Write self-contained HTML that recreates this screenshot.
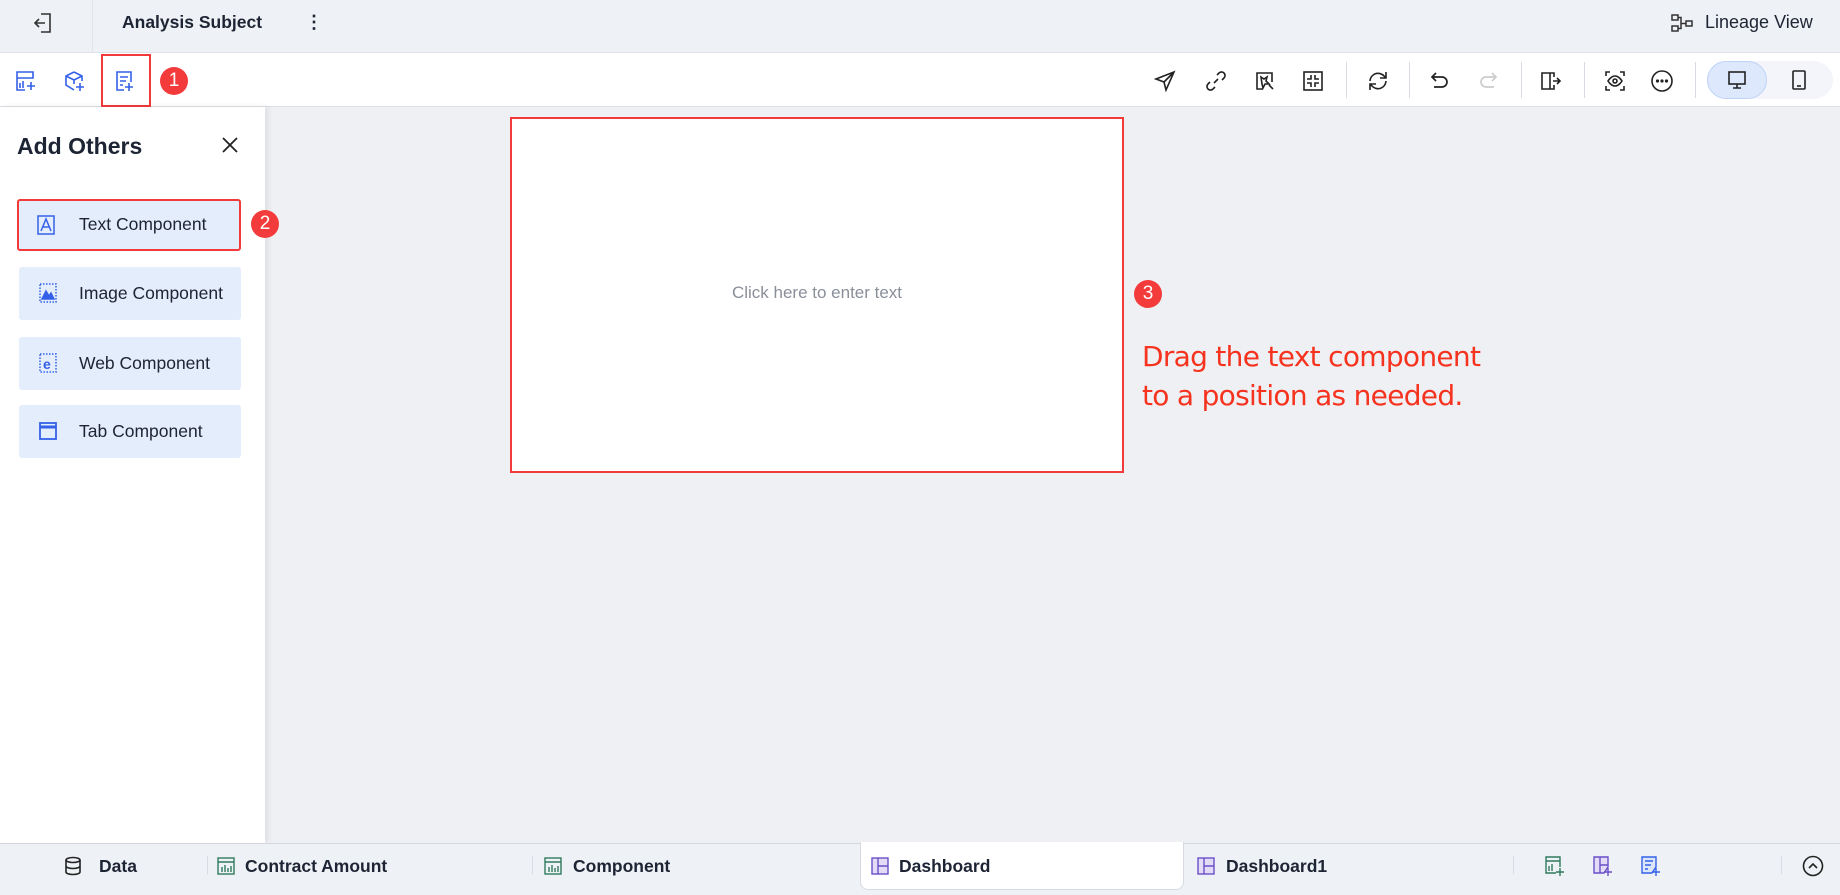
<!DOCTYPE html>
<html><head><meta charset="utf-8"><style>
*{box-sizing:border-box;margin:0;padding:0}
body{width:1840px;height:895px;overflow:hidden;background:#eff0f4;font-family:"Liberation Sans",sans-serif;color:#1d2434;position:relative}
.abs{position:absolute}
.top{left:0;top:0;width:1840px;height:53px;background:#eef1f5;border-bottom:1px solid #dfe2e8}
.tb{left:0;top:53px;width:1840px;height:54px;background:#fff;border-bottom:1px solid #dcdfe5}
.panel{left:0;top:107px;width:265px;height:736px;background:#fff;box-shadow:3px 0 6px rgba(0,0,0,.08)}
.item{position:absolute;left:19px;width:222px;height:53px;background:#e4edfc;border-radius:3px;font-size:17.5px;line-height:53px;padding-left:60px}
.item svg{position:absolute;left:20px;top:16px}
.badge{position:absolute;width:28px;height:28px;border-radius:50%;background:#f43b3b;color:#fff;font-size:19px;text-align:center;line-height:28px}
.bot{left:0;top:843px;width:1840px;height:52px;background:#eef1f5;border-top:1px solid #d4d7de}
.bt{position:absolute;top:855px;font-size:17.5px;font-weight:bold;line-height:22px}
.sep{position:absolute;width:1px;background:#d8dbe2}
svg{display:block}
</style></head><body>
<div class="abs top"></div>
<div class="sep" style="left:92px;top:0;height:53px;background:#e2e5ea"></div>
<svg class="abs" style="left:33px;top:12px" width="20" height="22" viewBox="0 0 20 22" fill="none" stroke="#333" stroke-width="1.6"><path d="M8 2h9v18H8M12 11H2M6 7l-4 4 4 4"/></svg>
<div class="abs" style="left:122px;top:12px;font-size:17.5px;font-weight:bold">Analysis Subject</div>
<div class="abs" style="left:305px;top:12px;font-size:18px;font-weight:bold">⋮</div>
<svg class="abs" style="left:1670px;top:13px" width="24" height="20" viewBox="0 0 24 20" fill="none" stroke="#333" stroke-width="1.5"><rect x="2" y="2" width="6" height="5"/><rect x="2" y="13" width="6" height="5"/><rect x="16" y="8" width="6" height="5"/><path d="M8 4.5h3v11H8M11 10.5h5"/></svg>
<div class="abs" style="left:1705px;top:12px;font-size:18px">Lineage View</div>

<div class="abs tb"></div>
<svg class="abs" style="left:15px;top:70px" width="22" height="22" viewBox="0 0 22 22" fill="none" stroke="#3461e8" stroke-width="1.6"><path d="M2 2h16v6H2zM2 8v12h8M5 18v-5M8 18v-7M16 12v8M12 16h8"/></svg>
<svg class="abs" style="left:64px;top:70px" width="22" height="22" viewBox="0 0 22 22" fill="none" stroke="#3461e8" stroke-width="1.6"><path d="M10 2l8 4v5M10 2L2 6v9l8 5M2 6l8 4 8-4M10 10v4M16 13v8M12 17h8"/></svg>
<svg class="abs" style="left:114px;top:70px" width="22" height="22" viewBox="0 0 22 22" fill="none" stroke="#3461e8" stroke-width="1.6"><path d="M10 20H3V2h14v10M6 7h8M6 11h6M6 15h3M15 13v8M11 17h8"/></svg>
<div class="abs" style="left:101px;top:54px;width:50px;height:53px;border:2px solid #f23a3a"></div>
<div class="badge" style="left:160px;top:67px">1</div>

<svg class="abs" style="left:1154px;top:70px" width="22" height="22" viewBox="0 0 22 22" fill="none" stroke="#222" stroke-width="1.6"><path d="M20 2L2 9l8 3 2 8z M20 2L10 12"/></svg>
<svg class="abs" style="left:1205px;top:70px" width="22" height="22" viewBox="0 0 22 22" fill="none" stroke="#222" stroke-width="1.6"><path d="M9 13l4-4M12 5l2-2a3.5 3.5 0 015 5l-2 2M10 17l-2 2a3.5 3.5 0 01-5-5l2-2"/></svg>
<svg class="abs" style="left:1254px;top:70px" width="22" height="22" viewBox="0 0 22 22" fill="none" stroke="#222" stroke-width="1.6"><path d="M9 19H3V3h15v9M7 7l3 2 3-2-1 4 3 3-4 0-2 4-1-4z M15 15l4 4"/></svg>
<svg class="abs" style="left:1302px;top:70px" width="22" height="22" viewBox="0 0 22 22" fill="none" stroke="#222" stroke-width="1.6"><rect x="2" y="2" width="18" height="18"/><path d="M9 5v4H5M13 5v4h4M9 17v-4H5M13 17v-4h4"/></svg>
<div class="sep" style="left:1346px;top:62px;height:36px"></div>
<svg class="abs" style="left:1366px;top:69px" width="24" height="24" viewBox="0 0 24 24" fill="none" stroke="#222" stroke-width="1.6"><path d="M4 12a8 8 0 0114-5l2 2M20 12a8 8 0 01-14 5l-2-2M20 3v6h-6M4 21v-6h6"/></svg>
<div class="sep" style="left:1409px;top:62px;height:36px"></div>
<svg class="abs" style="left:1429px;top:70px" width="22" height="22" viewBox="0 0 22 22" fill="none" stroke="#222" stroke-width="1.7"><path d="M7 3L3 7l4 4M3 7h10a5 5 0 010 10H5"/></svg>
<svg class="abs" style="left:1477px;top:70px" width="22" height="22" viewBox="0 0 22 22" fill="none" stroke="#ccc" stroke-width="1.7"><path d="M15 3l4 4-4 4M19 7H9a5 5 0 000 10h8"/></svg>
<div class="sep" style="left:1521px;top:62px;height:36px"></div>
<svg class="abs" style="left:1540px;top:70px" width="22" height="22" viewBox="0 0 22 22" fill="none" stroke="#222" stroke-width="1.6"><path d="M2 3h8v16H2zM10 3h4v4M10 19h4v-4M13 11h7M17 8l3 3-3 3"/></svg>
<div class="sep" style="left:1584px;top:62px;height:36px"></div>
<svg class="abs" style="left:1604px;top:70px" width="22" height="22" viewBox="0 0 22 22" fill="none" stroke="#222" stroke-width="1.6"><path d="M2 6V2h4M16 2h4v4M20 16v4h-4M6 20H2v-4M4 11s3-5 7-5 7 5 7 5-3 5-7 5-7-5-7-5z"/><circle cx="11" cy="11" r="2"/></svg>
<svg class="abs" style="left:1650px;top:69px" width="24" height="24" viewBox="0 0 24 24" fill="#222" stroke="#222" stroke-width="1.6"><circle cx="12" cy="12" r="10" fill="none"/><circle cx="7.5" cy="12" r=".8"/><circle cx="12" cy="12" r=".8"/><circle cx="16.5" cy="12" r=".8"/></svg>
<div class="sep" style="left:1695px;top:62px;height:36px"></div>
<div class="abs" style="left:1707px;top:61px;width:126px;height:38px;background:#f3f5fb;border-radius:19px"></div>
<div class="abs" style="left:1707px;top:61px;width:60px;height:38px;background:#dde8fc;border:1px solid #bfd2f7;border-radius:19px"></div>
<svg class="abs" style="left:1726px;top:69px" width="22" height="22" viewBox="0 0 22 22" fill="none" stroke="#222" stroke-width="1.6"><rect x="3" y="3" width="16" height="12"/><path d="M11 15v4M7 19h8"/></svg>
<svg class="abs" style="left:1788px;top:69px" width="22" height="22" viewBox="0 0 22 22" fill="none" stroke="#222" stroke-width="1.6"><rect x="5" y="2" width="12" height="18" rx="1"/><path d="M9 17h4"/></svg>

<div class="abs panel"></div>
<div class="abs" style="left:17px;top:133px;font-size:23px;font-weight:bold">Add Others</div>
<svg class="abs" style="left:221px;top:136px" width="18" height="18" viewBox="0 0 18 18" stroke="#222" stroke-width="1.8"><path d="M2 2l14 14M16 2L2 16"/></svg>
<div class="item" style="top:199px;left:17px;width:224px;height:52px;border:2.5px solid #f23a3a;line-height:47px;padding-left:60px">
<svg style="left:18px;top:14px" width="18" height="20" viewBox="0 0 18 20" fill="none" stroke="#3461e8" stroke-width="1.5"><rect x="1" y="1" width="16" height="18"/><path d="M4 16l5-12 5 12M6 12h6"/></svg>Text Component</div>
<div class="badge" style="left:251px;top:210px">2</div>
<div class="item" style="top:267px"><svg width="18" height="20" viewBox="0 0 18 20" fill="none" stroke="#3461e8" stroke-width="1.5"><rect x="1" y="1" width="16" height="18" stroke-dasharray="1.5 1.5"/><path d="M3 16l4-8 3 5 2-3 3 6z" fill="#3461e8"/></svg>Image Component</div>
<div class="item" style="top:337px"><svg width="18" height="20" viewBox="0 0 18 20" fill="none" stroke="#3461e8" stroke-width="1.5"><rect x="1" y="1" width="16" height="18" stroke-dasharray="1.5 1.5"/><text x="4" y="16" font-size="14" font-weight="bold" fill="#3461e8" stroke="none" font-family="Liberation Sans">e</text></svg>Web Component</div>
<div class="item" style="top:405px"><svg width="18" height="20" viewBox="0 0 18 20" fill="none" stroke="#3461e8" stroke-width="1.8"><rect x="1" y="2" width="16" height="16"/><path d="M1 6h16" stroke-width="3"/></svg>Tab Component</div>

<div class="abs" style="left:510px;top:117px;width:614px;height:356px;background:#fff;border:2.5px solid #f23a3a"></div>
<div class="abs" style="left:510px;top:283px;width:614px;text-align:center;font-size:17px;color:#8a8f99">Click here to enter text</div>
<div class="badge" style="left:1134px;top:280px">3</div>
<div class="abs" style="left:1142px;top:337px;font-size:28px;line-height:39px;color:#f5331f;font-family:'DejaVu Sans','Liberation Sans',sans-serif;letter-spacing:-0.7px">Drag the text component<br>to a position as needed.</div>

<div class="abs bot"></div>
<div class="abs" style="left:860px;top:842px;width:324px;height:48px;background:#fff;border-radius:0 0 8px 8px;border:1px solid #d8dbe2;border-top:none"></div>
<svg class="abs" style="left:64px;top:856px" width="18" height="20" viewBox="0 0 18 20" fill="none" stroke="#222" stroke-width="1.6"><ellipse cx="9" cy="4" rx="7" ry="2.5"/><path d="M2 4v12c0 1.4 3 2.5 7 2.5s7-1.1 7-2.5V4M2 10c0 1.4 3 2.5 7 2.5s7-1.1 7-2.5"/></svg>
<div class="bt" style="left:99px">Data</div>
<div class="sep" style="left:207px;top:856px;height:18px"></div>
<svg class="abs" style="left:217px;top:857px" width="18" height="18" viewBox="0 0 18 18" fill="none" stroke="#2f7a5c" stroke-width="1.4"><rect x="1" y="1" width="16" height="16"/><path d="M1 5h16M5 15v-5M8 15v-7M11 15v-4M14 15v-6"/></svg>
<div class="bt" style="left:245px">Contract Amount</div>
<div class="sep" style="left:532px;top:856px;height:18px"></div>
<svg class="abs" style="left:544px;top:857px" width="18" height="18" viewBox="0 0 18 18" fill="none" stroke="#2f7a5c" stroke-width="1.4"><rect x="1" y="1" width="16" height="16"/><path d="M1 5h16M5 15v-5M8 15v-7M11 15v-4M14 15v-6"/></svg>
<div class="bt" style="left:573px">Component</div>
<svg class="abs" style="left:871px;top:857px" width="18" height="18" viewBox="0 0 18 18" fill="#e3dcf7" stroke="#6a4fc8" stroke-width="1.4"><rect x="1" y="1" width="16" height="16"/><path d="M7 1v16M7 9h10"/></svg>
<div class="bt" style="left:899px">Dashboard</div>
<svg class="abs" style="left:1197px;top:857px" width="18" height="18" viewBox="0 0 18 18" fill="#e3dcf7" stroke="#6a4fc8" stroke-width="1.4"><rect x="1" y="1" width="16" height="16"/><path d="M7 1v16M7 9h10"/></svg>
<div class="bt" style="left:1226px">Dashboard1</div>
<div class="sep" style="left:1513px;top:856px;height:18px"></div>
<svg class="abs" style="left:1544px;top:855px" width="22" height="22" viewBox="0 0 22 22" fill="none" stroke="#2f7a5c" stroke-width="1.4"><path d="M12 18H2V2h14v10M2 6h14M5 16v-5M8 16v-7M16 13v8M12 17h8"/></svg>
<svg class="abs" style="left:1592px;top:855px" width="22" height="22" viewBox="0 0 22 22" fill="#e3dcf7" stroke="#6a4fc8" stroke-width="1.4"><path d="M12 18H2V2h14v10zM8 2v16M8 10h8"/><path d="M16 13v8M12 17h8" fill="none"/></svg>
<svg class="abs" style="left:1640px;top:855px" width="22" height="22" viewBox="0 0 22 22" fill="#dbe6fb" stroke="#3461e8" stroke-width="1.4"><path d="M12 18H2V2h14v10z"/><path d="M5 6h8M5 10h6M5 14h3M16 13v8M12 17h8" fill="none"/></svg>
<div class="sep" style="left:1781px;top:856px;height:18px"></div>
<svg class="abs" style="left:1802px;top:855px" width="22" height="22" viewBox="0 0 22 22" fill="none" stroke="#222" stroke-width="1.6"><circle cx="11" cy="11" r="9.5"/><path d="M7 13l4-4 4 4"/></svg>
</body></html>
